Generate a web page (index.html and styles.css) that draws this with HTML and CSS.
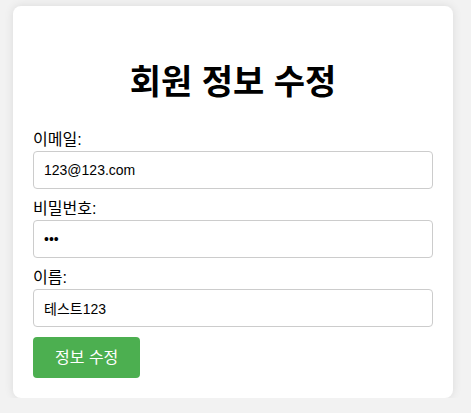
FILE: index.html
```html
<!DOCTYPE html>
<html lang="ko">
<head>
<meta charset="utf-8">
<title>회원 정보 수정</title>
<link rel="stylesheet" href="styles.css">
</head>
<body>
<div class="card">
  <h1 class="title">회원 정보 수정</h1>
  <form class="form">
    <div class="group">
      <label class="label" for="email">이메일:</label>
      <input class="field" id="email" type="email" value="123@123.com">
    </div>
    <div class="group">
      <label class="label" for="pw">비밀번호:</label>
      <input class="field" id="pw" type="password" value="123">
    </div>
    <div class="group">
      <label class="label" for="name">이름:</label>
      <input class="field" id="name" type="text" value="테스트123">
    </div>
    <button class="submit" type="button">정보 수정</button>
  </form>
</div>
</body>
</html>
```

FILE: styles.css
```css
html, body {
  margin: 0;
  padding: 0;
}
body {
  background: #f2f2f2;
  font-family: "Liberation Sans", Arial, "Noto Sans CJK KR", sans-serif;
  color: #000;
  padding: 6px 0 0 13px;
}
.card {
  width: 400px;
  padding: 20px;
  background: #fff;
  border-radius: 8px;
  box-shadow: 0 0 10px rgba(0, 0, 0, 0.1);
}
.title {
  text-align: center;
  font-size: 34px;
  line-height: 46px;
  font-weight: bold;
  margin: 33px 0 23px;
}
.form {
  display: flex;
  flex-direction: column;
}
.group {
  display: flex;
  flex-direction: column;
  margin-bottom: 8px;
}
.label {
  font-size: 16px;
  line-height: 23px;
}
.field {
  box-sizing: border-box;
  width: 100%;
  height: 38px;
  padding: 8px 10px;
  font-family: "Liberation Sans", Arial, "Noto Sans CJK KR", sans-serif;
  font-size: 14px;
  border: 1px solid #ccc;
  border-radius: 4px;
  margin: 0;
}
.submit {
  align-self: flex-start;
  margin-top: 2px;
  padding: 10px 22px;
  line-height: 21px;
  background: #4caf50;
  color: #fff;
  border: none;
  border-radius: 4px;
  font-family: "Liberation Sans", Arial, "Noto Sans CJK KR", sans-serif;
  font-size: 16px;
  cursor: pointer;
}
```
